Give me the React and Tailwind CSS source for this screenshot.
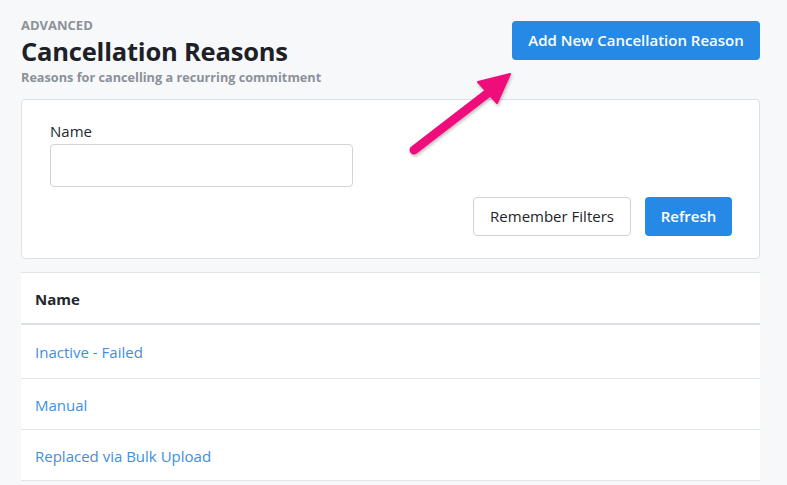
import React from 'react';

const rows = ['Inactive - Failed', 'Manual', 'Replaced via Bulk Upload'];

function Arrow() {
  // callout arrow pointing at the add button
  return (
    <svg
      className="absolute left-[400px] top-[66px] pointer-events-none"
      width="120"
      height="100"
      viewBox="0 0 120 100"
    >
      <defs>
        <filter id="sh" x="-20%" y="-20%" width="140%" height="140%">
          <feDropShadow dx="1" dy="2" stdDeviation="1.5" floodColor="#000" floodOpacity="0.25" />
        </filter>
      </defs>
      <g filter="url(#sh)" fill="#ef0c7b" stroke="#ef0c7b">
        <line x1="14" y1="84" x2="88" y2="27" strokeWidth="9" strokeLinecap="round" />
        <polygon points="110,8 78,16 97,37" strokeWidth="2" strokeLinejoin="round" />
      </g>
    </svg>
  );
}

export default function App() {
  return (
    <div className="relative min-h-screen bg-[#f7f8fa] pl-[21px] pr-[27px] pt-[16px] font-['Open_Sans',sans-serif]">
      {/* Header */}
      <div className="flex justify-between items-start">
        <div>
          <div className="text-[13px] font-bold uppercase text-[#8b9199] leading-[18px]">Advanced</div>
          <h1 className="text-[25.5px] font-bold text-[#1d2126] leading-[34px] tracking-[-0.2px]">
            Cancellation Reasons
          </h1>
          <div className="text-[12.7px] font-bold text-[#8b9199] leading-[18px]">
            Reasons for cancelling a recurring commitment
          </div>
        </div>
        <button className="mt-[5px] w-[248px] h-[39px] rounded-[4px] bg-[#2589e5] text-white text-[15px] font-semibold">
          Add New Cancellation Reason
        </button>
      </div>

      {/* Filters */}
      <div className="mt-[13px] bg-white border border-[#dcdfe3] rounded-[4px] pl-[28px] pr-[27px] pt-[21px] pb-[22px]">
        <label className="block text-[15px] text-[#23272c] leading-[20px] mb-[3px]">Name</label>
        <input className="block w-[303px] h-[43px] border border-[#cfd4da] rounded-[4px] bg-white outline-none px-3" />
        <div className="flex justify-end gap-[14px] mt-[10px]">
          <button className="w-[158px] h-[39px] border border-[#cfd4da] rounded-[4px] bg-white text-[15px] text-[#1f2328]">
            Remember Filters
          </button>
          <button className="w-[87px] h-[39px] rounded-[4px] bg-[#2589e5] text-white text-[15px] font-semibold">
            Refresh
          </button>
        </div>
      </div>

      {/* Table */}
      <div className="mt-[13px] bg-white border-t border-[#e1e4e8]">
        <div className="h-[52px] flex items-center px-[14px] pt-[2px] border-b-2 border-[#dde0e4] text-[15px] font-bold text-[#22262b]">
          Name
        </div>
        {rows.map((r, i) => (
          <div
            key={r}
            className={`${i === 0 ? 'h-[54px]' : 'h-[51px]'} flex items-center px-[14px] pt-[2px] border-b border-[#e1e4e8] text-[15px] text-[#3d8fe3]`}
          >
            {r}
          </div>
        ))}
      </div>

      <Arrow />
    </div>
  );
}
